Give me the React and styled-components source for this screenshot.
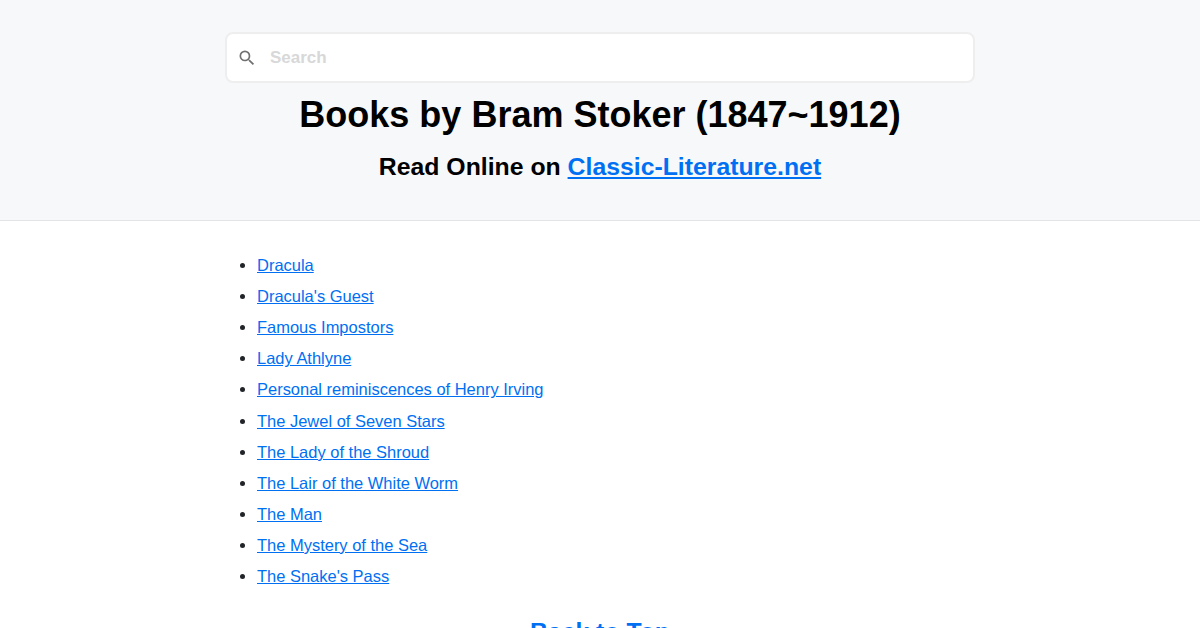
import React from 'react'
import styled, { createGlobalStyle } from 'styled-components'

const books = [
  'Dracula',
  "Dracula's Guest",
  'Famous Impostors',
  'Lady Athlyne',
  'Personal reminiscences of Henry Irving',
  'The Jewel of Seven Stars',
  'The Lady of the Shroud',
  'The Lair of the White Worm',
  'The Man',
  'The Mystery of the Sea',
  "The Snake's Pass",
]

const GlobalStyle = createGlobalStyle`
  html, body {
    margin: 0;
    height: 628px;
    overflow: hidden;
    background: #fff;
    color: #212529;
    font-family: "Liberation Sans", Arial, sans-serif;
  }
  * {
    box-sizing: border-box;
  }
`

const Header = styled.header`
  background: #f7f8fa;
  border-bottom: 1px solid #e2e4e8;
  height: 221px;
  padding-top: 32px;
  display: flex;
  flex-direction: column;
  align-items: center;
`

const SearchBox = styled.div`
  width: 750px;
  height: 51px;
  background: #fff;
  border: 2px solid #eeeeee;
  border-radius: 8px;
  display: flex;
  align-items: center;
  padding-left: 10px;
  gap: 13px;
`

const SearchInput = styled.input`
  flex: 1;
  border: 0;
  outline: 0;
  padding: 0;
  background: transparent;
  font: bold 17px "Liberation Sans", Arial, sans-serif;
  &::placeholder {
    color: #d8d8d8;
    opacity: 1;
  }
`

const Title = styled.h1`
  margin: 9px 0 0;
  font-size: 36px;
  line-height: 45px;
  font-weight: 700;
  color: #000;
`

const Subtitle = styled.h2`
  margin: 14px 0 0;
  font-size: 24.8px;
  line-height: 31px;
  font-weight: 700;
  color: #000;
`

const Link = styled.a`
  color: #0070f3;
  text-decoration: underline;
`

const Main = styled.main`
  width: 750px;
  margin: 0 auto;
  padding-top: 29.1px;
`

const BookList = styled.ul`
  margin: 0;
  padding-left: 32px;
  list-style: disc;
`

const BookItem = styled.li`
  font-size: 16.48px;
  line-height: 31.1px;
  color: #212529;
`

const BackToTop = styled.a`
  display: block;
  margin-top: 23.5px;
  text-align: center;
  font-size: 24.8px;
  line-height: 31px;
  font-weight: 700;
  color: #0070f3;
`

const SearchIcon = () => (
  <svg width="20" height="20" viewBox="0 0 24 24" fill="#707070">
    <path d="M15.5 14h-.79l-.28-.27A6.47 6.47 0 0 0 16 9.5 6.5 6.5 0 1 0 9.5 16c1.61 0 3.09-.59 4.23-1.57l.27.28v.79l5 4.99L20.49 19l-4.99-5zm-6 0C7.01 14 5 11.99 5 9.5S7.01 5 9.5 5 14 7.01 14 9.5 11.99 14 9.5 14z" />
  </svg>
)

export default function App() {
  return (
    <>
      <GlobalStyle />
      <Header>
        <SearchBox>
          <SearchIcon />
          <SearchInput placeholder="Search" />
        </SearchBox>
        <Title>Books by Bram Stoker (1847~1912)</Title>
        <Subtitle>
          Read Online on <Link href="#">Classic-Literature.net</Link>
        </Subtitle>
      </Header>
      <Main>
        <BookList>
          {books.map(book => (
            <BookItem key={book}>
              <Link href="#">{book}</Link>
            </BookItem>
          ))}
        </BookList>
        <BackToTop href="#">Back to Top</BackToTop>
      </Main>
    </>
  )
}
